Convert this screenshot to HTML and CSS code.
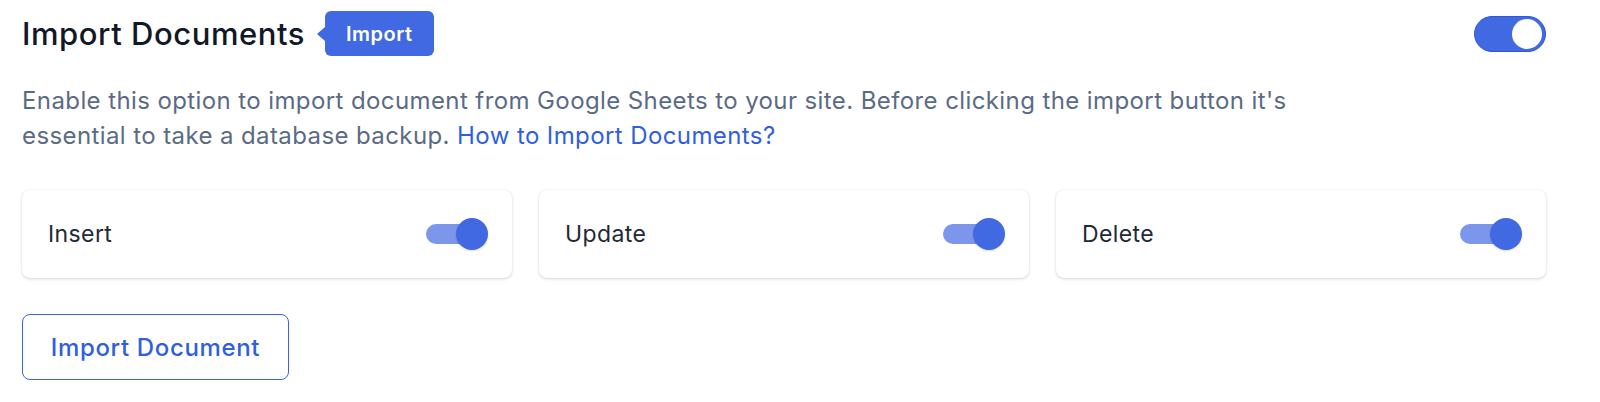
FILE: index.html
```html
<!DOCTYPE html>
<html lang="en">
<head>
<meta charset="utf-8">
<title>Import Documents</title>
<link rel="stylesheet" href="styles.css">
</head>
<body>
<div class="panel">
  <div class="head">
    <div class="head-left">
      <h2 class="title">Import Documents</h2>
      <span class="badge">Import</span>
    </div>
    <label class="switch switch-main">
      <span class="switch-knob"></span>
    </label>
  </div>
  <p class="desc">Enable this option to import document from Google Sheets to your site. Before clicking the import button it's essential to take a database backup. <a class="link" href="#">How to Import Documents?</a></p>
  <div class="cards">
    <div class="card">
      <span class="card-label">Insert</span>
      <span class="mini-switch"><span class="mini-knob"></span></span>
    </div>
    <div class="card">
      <span class="card-label">Update</span>
      <span class="mini-switch"><span class="mini-knob"></span></span>
    </div>
    <div class="card">
      <span class="card-label">Delete</span>
      <span class="mini-switch"><span class="mini-knob"></span></span>
    </div>
  </div>
  <button class="btn" type="button">Import Document</button>
</div>
</body>
</html>
```

FILE: styles.css
```css
* { box-sizing: border-box; }
html, body { margin: 0; background: #ffffff; }
body { font-family: Inter, "Noto Sans", "Liberation Sans", sans-serif; }

.panel {
  width: 1524px;
  margin-left: 22px;
  padding-top: 11px;
}

.head {
  display: flex;
  align-items: center;
  justify-content: space-between;
  height: 45px;
}
.head-left {
  display: flex;
  align-items: center;
}
.title {
  margin: 0;
  font-size: 31px;
  font-weight: 500;
  color: #111827;
  letter-spacing: 0.55px;
}
.badge {
  position: relative;
  margin-left: 20px;
  height: 45px;
  padding: 0 21px;
  display: inline-flex;
  align-items: center;
  background: #4169e1;
  color: #ffffff;
  font-size: 20px;
  font-weight: 600;
  letter-spacing: 0.5px;
  border-radius: 6px;
}
.badge::before {
  content: "";
  position: absolute;
  left: -8px;
  top: 50%;
  margin-top: -7px;
  border-top: 7px solid transparent;
  border-bottom: 7px solid transparent;
  border-right: 8px solid #4169e1;
}

.switch {
  display: inline-flex;
  align-items: center;
  justify-content: flex-end;
  width: 72px;
  height: 36px;
  padding: 3px;
  border-radius: 18px;
  background: #4169e1;
  border: 1px solid #2f57d6;
}
.switch-knob {
  width: 30px;
  height: 30px;
  border-radius: 50%;
  background: #ffffff;
}

.desc {
  margin: 27px 0 0;
  font-size: 24px;
  letter-spacing: 0.4px;
  line-height: 35px;
  color: #5b6b85;
  max-width: 1330px;
}
.link {
  color: #2f5fe0;
  text-decoration: none;
}

.cards {
  display: grid;
  grid-template-columns: repeat(3, 1fr);
  gap: 27px;
  margin-top: 37px;
}
.card {
  height: 88px;
  display: flex;
  align-items: center;
  justify-content: space-between;
  padding: 0 25px 0 26px;
  background: #ffffff;
  border-radius: 8px;
  box-shadow: 0 1px 3px rgba(30, 41, 80, 0.18), 0 0 1px rgba(30, 41, 80, 0.12);
}
.card-label {
  font-size: 23px;
  letter-spacing: 0.4px;
  color: #1f2937;
}
.mini-switch {
  position: relative;
  width: 61px;
  height: 20px;
  border-radius: 10px;
  background: #7b96eb;
  display: flex;
  align-items: center;
  justify-content: flex-end;
}
.mini-knob {
  width: 32px;
  height: 32px;
  margin-right: -1px;
  border-radius: 50%;
  background: #4169e1;
  box-shadow: 0 1px 2px rgba(0, 0, 0, 0.15);
}

.btn {
  display: block;
  margin-top: 36px;
  width: 267px;
  height: 66px;
  border: 1.5px solid #3b63e0;
  border-radius: 8px;
  background: #ffffff;
  color: #2f5fe0;
  font-family: Inter, "Noto Sans", "Liberation Sans", sans-serif;
  font-size: 24px;
  font-weight: 500;
  letter-spacing: 0.65px;
  padding: 0;
}
```
